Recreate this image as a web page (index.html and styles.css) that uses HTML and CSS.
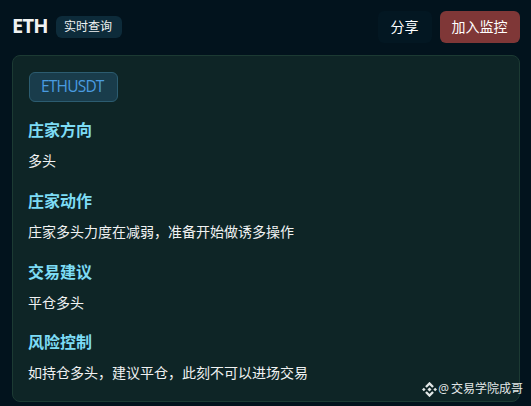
FILE: index.html
```html
<!DOCTYPE html>
<html lang="zh-CN">
<head>
  <meta charset="UTF-8" />
  <meta name="viewport" content="width=device-width, initial-scale=1.0" />
  <title>ETH 实时查询</title>
  <link rel="stylesheet" href="styles.css">
</head>
<body>
  <header class="topbar">
    <h1>ETH</h1>
    <span class="tag">实时查询</span>
    <div class="actions">
      <button class="btn btn-share">分享</button>
      <button class="btn btn-monitor">加入监控</button>
    </div>
  </header>
  <main class="card">
    <span class="symbol"><span class="symbol-text">ETHUSDT</span></span>
    <section class="item">
      <h2>庄家方向</h2>
      <p>多头</p>
    </section>
    <section class="item">
      <h2>庄家动作</h2>
      <p>庄家多头力度在减弱，准备开始做诱多操作</p>
    </section>
    <section class="item">
      <h2>交易建议</h2>
      <p>平仓多头</p>
    </section>
    <section class="item">
      <h2>风险控制</h2>
      <p>如持仓多头，建议平仓，此刻不可以进场交易</p>
    </section>
  </main>
  <div class="watermark">
    <svg viewBox="0 0 14 14" width="15" height="15" fill="none" stroke="currentColor" stroke-width="2.2">
      <path d="M3.7 4.7 7 1.4l3.3 3.3M3.7 9.3 7 12.6l3.3-3.3" />
      <path d="M7 5.1 8.9 7 7 8.9 5.1 7zM1.7 5.3 3.4 7 1.7 8.7 0 7zM12.3 5.3 14 7l-1.7 1.7L10.6 7z" fill="currentColor" stroke="none" />
    </svg>
    <span class="at">@</span><span>交易学院成哥</span>
  </div>
</body>
</html>
```

FILE: styles.css
```css
* {
  box-sizing: border-box;
}
body {
  margin: 0;
  height: 406px;
  padding: 11px 11px 0 12px;
  overflow: hidden;
  background: #02131d;
  color: #f0f2f2;
  font-family: "Open Sans", "Noto Sans CJK SC", sans-serif;
  font-size: 14px;
}
h1, h2, p {
  margin: 0;
}
.topbar {
  display: flex;
  align-items: center;
  height: 32px;
}
h1 {
  width: 36px;
  padding-bottom: 2px;
  font-size: 20px;
  line-height: 30px;
  letter-spacing: -0.8px;
}
.tag {
  margin-left: 8px;
  padding: 0 8px;
  height: 22px;
  width: 66px;
  border-radius: 6px;
  background: #0d2b3a;
  font-size: 12px;
  line-height: 22px;
  white-space: nowrap;
}
.actions {
  display: flex;
  gap: 8px;
  margin-left: auto;
}
.btn {
  height: 32px;
  padding: 0 1px 0 0;
  border: 0;
  border-radius: 6px;
  color: #fff;
  font-family: inherit;
  font-size: 14px;
  line-height: 32px;
}
.btn-share {
  width: 54px;
  background: #031722;
}
.btn-monitor {
  width: 80px;
  background: #7f3737;
}
.card {
  height: 347px;
  margin-top: 12px;
  padding: 16px 15px;
  border: 1px solid #1c3a33;
  border-radius: 8px;
  background: #0e2526;
}
.symbol {
  display: block;
  width: 89px;
  height: 30px;
  margin-left: 1px;
  padding-left: 11px;
  border: 1px solid #2c5c70;
  border-radius: 6px;
  background: #193c4b;
  color: #4a9be0;
  font-size: 15.5px;
  line-height: 27px;
}
.symbol-text {
  letter-spacing: -0.8px;
}
.item {
  height: 70.7px;
}
.symbol + .item {
  margin-top: 16.3px;
}
h2 {
  color: #7ddcf5;
  font-size: 16px;
  line-height: 24px;
}
p {
  margin-top: 8px;
  line-height: 22px;
}
.watermark {
  position: absolute;
  right: 8px;
  bottom: 8px;
  display: flex;
  align-items: center;
  height: 18px;
  color: #e2e7e7;
  font-size: 12px;
  line-height: 18px;
}
.at {
  margin: 0 2px 0 1px;
}
```
